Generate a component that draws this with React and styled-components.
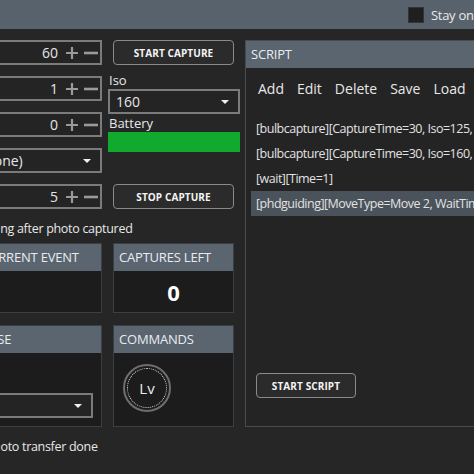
import React from "react";
import styled, { createGlobalStyle } from "styled-components";

const GlobalStyle = createGlobalStyle`
  html, body {
    margin: 0;
    padding: 0;
    background: #262626;
    overflow: hidden;
  }
  #root {
    width: 474px;
    height: 474px;
    overflow: hidden;
  }
  * {
    box-sizing: border-box;
  }
`;

const Window = styled.div`
  width: 474px;
  height: 474px;
  overflow: hidden;
  background: #262626;
  font-family: "Open Sans", "Noto Sans", sans-serif;
  color: #e6e6e6;
`;

const TopBar = styled.div`
  height: 29px;
  background: #58626c;
  display: flex;
  align-items: center;
  padding-left: 408px;
  white-space: nowrap;
`;

const CheckBox = styled.span`
  display: inline-block;
  flex-shrink: 0;
  width: 16px;
  height: 16px;
  background: #1f1f1f;
  border: 1px solid #343434;
`;

const CheckText = styled.span`
  font-size: 12.5px;
  letter-spacing: -0.3px;
  color: #e8e8e8;
  white-space: nowrap;
`;

const TopText = styled(CheckText)`
  margin-left: 7px;
  font-size: 13px;
`;

const Body = styled.div`
  display: flex;
  margin-left: -130px;
  padding-top: 11px;
  column-gap: 5px;
`;

const LeftArea = styled.div`
  width: 370px;
  flex-shrink: 0;
  display: flex;
  flex-direction: column;
`;

const Controls = styled.div`
  display: grid;
  grid-template-columns: 232px 132px;
  column-gap: 6px;
`;

const Column = styled.div`
  display: flex;
  flex-direction: column;
  align-items: ${(p) => p.$align || "stretch"};
  row-gap: ${(p) => p.$gap || 0}px;
`;

const Field = styled.div`
  height: 25px;
  width: ${(p) => (p.$width ? `${p.$width}px` : "auto")};
  border: 2px solid #7b7b7b;
  background: #242424;
  display: flex;
  align-items: center;
`;

const SpinField = styled(Field)`
  justify-content: flex-end;
  padding-right: 2px;
`;

const SpinValue = styled.span`
  font-size: 14px;
  color: #e6e6e6;
  margin-right: 8px;
`;

const SpinIcons = styled.span`
  display: flex;
  align-items: center;
  column-gap: 6px;
`;

const SelectField = styled(Field)`
  justify-content: space-between;
  padding: 0 ${(p) => p.$arrowPad || 9}px 0 6px;
  font-size: 14px;
`;

const Arrow = styled.span`
  width: 0;
  height: 0;
  border-left: 4px solid transparent;
  border-right: 4px solid transparent;
  border-top: 4px solid #f0f0f0;
`;

const FieldLabel = styled.div`
  font-size: 13px;
  line-height: 18px;
  padding-left: 1px;
  padding-top: ${(p) => p.$top || 0}px;
  color: #e8e8e8;
`;

const BatteryBar = styled.div`
  height: 20px;
  background: #10aa2e;
`;

const ActionButton = styled.button`
  height: 25px;
  width: ${(p) => p.$width || 121}px;
  margin-left: ${(p) => p.$left || 5}px;
  margin-top: ${(p) => (p.$push ? "auto" : "0")};
  margin-bottom: ${(p) => p.$bottom || 0}px;
  border: 1.5px solid #8a8a8a;
  border-radius: 4px;
  background: #2b2b2b;
  color: #f4f4f4;
  font-family: "Open Sans", "Noto Sans", sans-serif;
  font-weight: 700;
  font-size: 10px;
  letter-spacing: 0.1px;
  padding: 0;
  cursor: pointer;
`;

const CheckRow = styled.div`
  display: flex;
  align-items: center;
  column-gap: 6px;
  height: 18px;
  padding-left: ${(p) => p.$indent}px;
  margin-top: 10px;
  margin-bottom: 6px;
  white-space: nowrap;
`;

const SmallCheck = styled(CheckBox)`
  width: 14px;
  height: 14px;
`;

const PanelGrid = styled.div`
  display: grid;
  grid-template-columns: 127px 121px;
  grid-template-rows: 70px 102px;
  gap: 12px 11px;
  justify-content: end;
  padding-right: 6px;
`;

const Panel = styled.div`
  border: 1px solid #3a3f45;
  background: ${(p) => p.$bg || "#1c1c1c"};
  display: flex;
  flex-direction: column;
  overflow: hidden;
`;

const PanelHeader = styled.div`
  height: 27px;
  flex-shrink: 0;
  background: #5a6570;
  color: #e8ecef;
  font-size: 13px;
  line-height: 27px;
  padding-left: 5px;
  white-space: nowrap;
  letter-spacing: -0.2px;
`;

const PanelBody = styled.div`
  flex: 1;
  display: flex;
  flex-direction: column;
`;

const BigCount = styled.div`
  flex: 1;
  display: flex;
  align-items: center;
  justify-content: center;
  font-size: 22px;
  font-weight: 700;
  color: #ffffff;
`;

const PanelSelect = styled(SelectField)`
  margin: auto 8px 8px 0;
`;

const LvButton = styled.button`
  position: relative;
  width: 48px;
  height: 48px;
  margin: 11px 0 0 9px;
  border-radius: 50%;
  border: 2.5px solid #6e6e6e;
  background: #1c1c1c;
  color: #ececec;
  font-family: "Open Sans", "Noto Sans", sans-serif;
  font-size: 15px;
  padding: 0;
  &::after {
    content: "";
    position: absolute;
    inset: 2px;
    border-radius: 50%;
    border: 1.5px dotted #d8d8d8;
  }
`;

const ScriptPanel = styled(Panel)`
  width: 280px;
  height: 387px;
  flex-shrink: 0;
  border-color: #464c53;
  background: #242424;
`;

const Toolbar = styled.div`
  height: 40px;
  display: flex;
  align-items: center;
  column-gap: 13px;
  padding-left: 12px;
  font-size: 14px;
  color: #e8e8e8;
  white-space: nowrap;
`;

const ToolItem = styled.span`
  cursor: pointer;
`;

const ScriptList = styled.div`
  margin: 8px 0 0 5px;
  display: flex;
  flex-direction: column;
`;

const ScriptRow = styled.div`
  height: 25px;
  line-height: 25px;
  padding-left: 5px;
  font-size: 12.5px;
  letter-spacing: -0.5px;
  color: #e2e2e2;
  white-space: nowrap;
  background: ${(p) => (p.$selected ? "#4a525b" : "transparent")};
`;

const PlusIcon = () => (
  <svg width="12" height="12" viewBox="0 0 12 12">
    <path d="M6 0v12M0 6h12" stroke="#9a9a9a" strokeWidth="2.2" />
  </svg>
);

const MinusIcon = () => (
  <svg width="14" height="12" viewBox="0 0 14 12">
    <path d="M0 6h14" stroke="#9a9a9a" strokeWidth="2.6" />
  </svg>
);

const Spin = ({ value }) => (
  <SpinField $width={121}>
    <SpinValue>{value}</SpinValue>
    <SpinIcons>
      <PlusIcon />
      <MinusIcon />
    </SpinIcons>
  </SpinField>
);

const scriptLines = [
  "[bulbcapture][CaptureTime=30, Iso=125, Fnumber=8]",
  "[bulbcapture][CaptureTime=30, Iso=160, Fnumber=8]",
  "[wait][Time=1]",
  "[phdguiding][MoveType=Move 2, WaitTime=5]",
];

export default function App() {
  return (
    <Window>
      <GlobalStyle />
      <TopBar>
        <CheckBox />
        <TopText>Stay on top</TopText>
      </TopBar>
      <Body>
        <LeftArea>
          <Controls>
            <Column $gap={11} $align="flex-end">
              <Spin value="60" />
              <Spin value="1" />
              <Spin value="0" />
              <SelectField $width={129}>
                <span>(none)</span>
                <Arrow />
              </SelectField>
              <Spin value="5" />
            </Column>
            <Column>
              <ActionButton>START CAPTURE</ActionButton>
              <FieldLabel $top={6}>Iso</FieldLabel>
              <SelectField $arrowPad={9}>
                <span>160</span>
                <Arrow />
              </SelectField>
              <FieldLabel>Battery</FieldLabel>
              <BatteryBar />
              <ActionButton $push>STOP CAPTURE</ActionButton>
            </Column>
          </Controls>
          <CheckRow $indent={54}>
            <SmallCheck />
            <CheckText>Start guiding after photo captured</CheckText>
          </CheckRow>
          <PanelGrid>
            <Panel>
              <PanelHeader>CURRENT EVENT</PanelHeader>
              <PanelBody />
            </Panel>
            <Panel>
              <PanelHeader>CAPTURES LEFT</PanelHeader>
              <BigCount>0</BigCount>
            </Panel>
            <Panel>
              <PanelHeader>BASE</PanelHeader>
              <PanelBody>
                <PanelSelect>
                  <span></span>
                  <Arrow />
                </PanelSelect>
              </PanelBody>
            </Panel>
            <Panel>
              <PanelHeader>COMMANDS</PanelHeader>
              <PanelBody>
                <LvButton>Lv</LvButton>
              </PanelBody>
            </Panel>
          </PanelGrid>
          <CheckRow $indent={49}>
            <SmallCheck />
            <CheckText>Wait for photo transfer done</CheckText>
          </CheckRow>
        </LeftArea>
        <ScriptPanel>
          <PanelHeader>SCRIPT</PanelHeader>
          <PanelBody>
            <Toolbar>
              <ToolItem>Add</ToolItem>
              <ToolItem>Edit</ToolItem>
              <ToolItem>Delete</ToolItem>
              <ToolItem>Save</ToolItem>
              <ToolItem>Load</ToolItem>
            </Toolbar>
            <ScriptList>
              {scriptLines.map((line, i) => (
                <ScriptRow key={i} $selected={i === 3}>
                  {line}
                </ScriptRow>
              ))}
            </ScriptList>
            <ActionButton $push $width={100} $left={10} $bottom={28}>
              START SCRIPT
            </ActionButton>
          </PanelBody>
        </ScriptPanel>
      </Body>
    </Window>
  );
}
